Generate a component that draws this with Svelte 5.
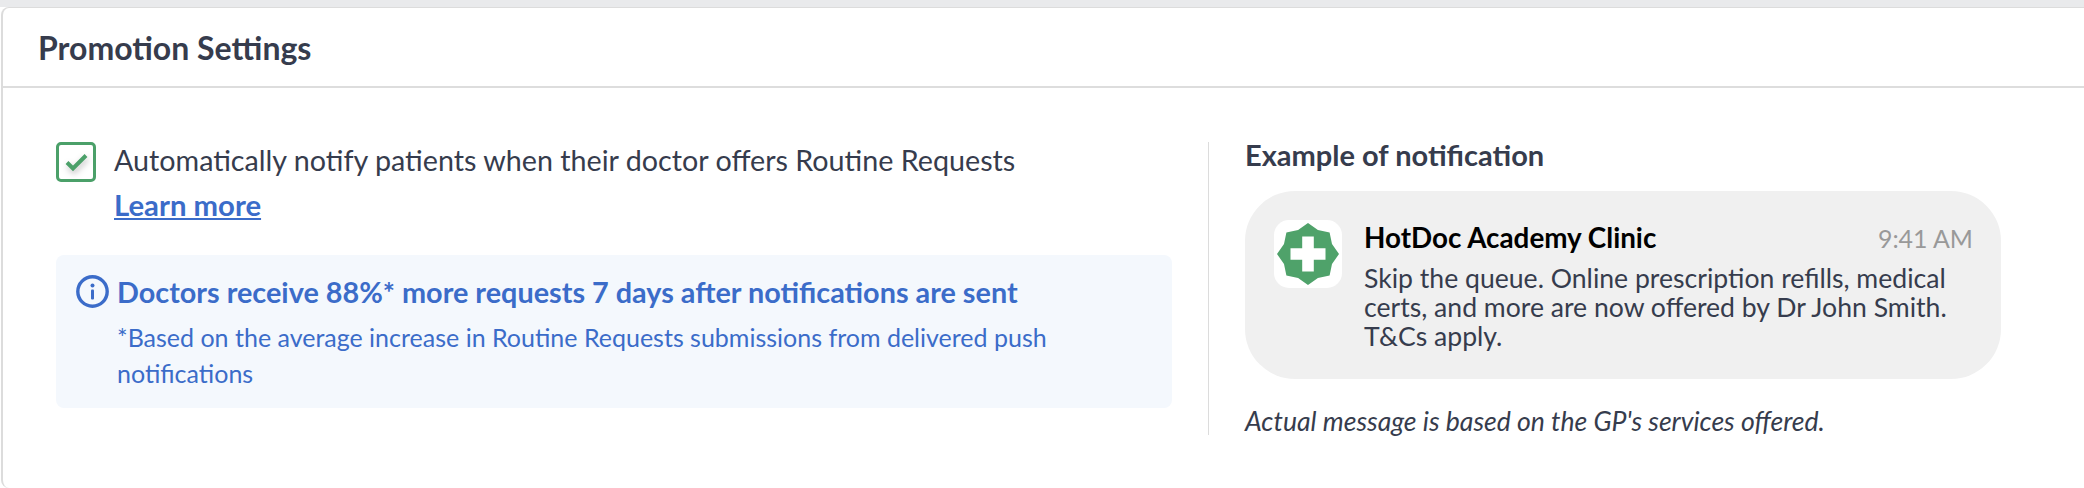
<script>
	// 8 pointed badge behind the cross, alternating tip and notch
	const badge = Array.from({ length: 16 }, (_, i) => {
		const a = (i * Math.PI) / 8;
		const r = i % 2 ? 26 : i % 4 ? 30.5 : 31;
		return `${(34 + r * Math.sin(a)).toFixed(1)},${(34 - r * Math.cos(a)).toFixed(1)}`;
	}).join(" ");
</script>

<div class="page">
	<section class="card">
		<header class="card-head">
			<h2>Promotion Settings</h2>
		</header>
		<div class="card-body">
			<div class="left">
				<div class="opt">
					<span class="box">
						<svg viewBox="0 0 30 30" width="30" height="30">
							<path d="M6 15.5l6 6L25 8.5" fill="none" stroke="#4ba069" stroke-width="4" />
						</svg>
					</span>
					<div class="opt-text">
						<p>Automatically notify patients when their doctor offers Routine Requests</p>
						<a href="#learn">Learn more</a>
					</div>
				</div>
				<div class="notice">
					<svg class="info" viewBox="0 0 33 33" width="33" height="33">
						<circle cx="16.5" cy="16.5" r="14.7" fill="none" stroke="#3b6cc9" stroke-width="3.4" />
						<circle cx="16.5" cy="10.5" r="2" fill="#3b6cc9" />
						<rect x="15" y="14.5" width="3" height="10" rx="1" fill="#3b6cc9" />
					</svg>
					<div>
						<h3>Doctors receive 88%* more requests 7 days after notifications are sent</h3>
						<p>*Based on the average increase in Routine Requests submissions from delivered push notifications</p>
					</div>
				</div>
			</div>
			<div class="right">
				<h3>Example of notification</h3>
				<div class="bubble">
					<svg class="logo" viewBox="0 0 68 68" width="68" height="68">
						<rect width="68" height="68" rx="15" fill="#fff" />
						<polygon points={badge} fill="#4fa26a" />
						<path d="M28.2 16.5h11.6v11.7h11.7v11.6H39.8v11.7H28.2V39.8H16.5V28.2h11.7z" fill="#fff" />
					</svg>
					<div class="msg">
						<div class="msg-top">
							<strong>HotDoc Academy Clinic</strong>
							<span>9:41 AM</span>
						</div>
						<p>Skip the queue. Online prescription refills, medical certs, and more are now offered by Dr John Smith. T&amp;Cs apply.</p>
					</div>
				</div>
				<em>Actual message is based on the GP's services offered.</em>
			</div>
		</div>
	</section>
</div>

<style>
	:global(body) {
		margin: 0;
		background: #fff;
	}

	.page {
		height: 488px;
		padding-top: 7px;
		box-sizing: border-box;
		background: linear-gradient(#e9eaec 7px, #fff 7px);
		font-family: Lato, "Open Sans", sans-serif;
		color: #363c4d;
		overflow: hidden;
	}

	.card {
		background: #fff;
		border-top: 1px solid #dcdcdc;
		border-left: 2px solid #dcdcdc;
		border-radius: 8px 0 0 8px;
		height: 100%;
		box-sizing: border-box;
		margin-left: 1px;
	}

	.card-head {
		height: 80px;
		box-sizing: border-box;
		border-bottom: 2px solid #dddddd;
		padding-left: 35px;
		display: flex;
		align-items: center;
	}

	h2 {
		margin: 0;
		font-size: 32px;
		font-weight: 700;
	}

	.card-body {
		display: flex;
		padding: 54px 0 0 53px;
	}

	.left {
		width: 1116px;
	}

	.opt {
		display: flex;
		gap: 18px;
	}

	.box {
		width: 40px;
		height: 40px;
		box-sizing: border-box;
		border: 3px solid #4ba069;
		border-radius: 5px;
		display: flex;
		align-items: center;
		justify-content: center;
		flex: none;
	}

	.box svg {
		filter: drop-shadow(1px 3px 3px rgba(0, 0, 0, 0.25));
	}

	.opt-text {
		margin-top: -3px;
	}

	.opt-text p {
		margin: 0;
		font-size: 28.7px;
		line-height: 42px;
	}

	.opt-text a {
		display: inline-block;
		margin-top: 3px;
		font-size: 29.3px;
		font-weight: 700;
		line-height: 42px;
		color: #3b6cc9;
	}

	.notice {
		margin-top: 29px;
		height: 153px;
		box-sizing: border-box;
		background: #f4f8fd;
		border-radius: 8px;
		padding: 20px 20px;
		display: flex;
		gap: 8px;
		color: #3b6cc9;
	}

	.notice .info {
		flex: none;
	}

	.notice h3 {
		margin: 0;
		font-size: 28.8px;
		font-weight: 700;
		line-height: 34px;
		color: #3b6cc9;
	}

	.notice p {
		margin: 10px 0 0;
		font-size: 25px;
		line-height: 36px;
	}

	.right {
		margin-left: 36px;
		border-left: 1px solid #dcdcdc;
		padding-left: 36px;
		width: 756px;
		height: 293px;
	}

	.right h3 {
		margin: -3px 0 0;
		font-size: 29px;
		font-weight: 700;
		line-height: 32px;
	}

	.bubble {
		margin-top: 20px;
		height: 188px;
		box-sizing: border-box;
		background: #f0f0f0;
		border-radius: 50px;
		padding: 29px 28px 0 29px;
		display: flex;
		gap: 22px;
	}

	.logo {
		flex: none;
	}

	.msg {
		flex: 1;
		padding-top: 1px;
	}

	.msg-top {
		display: flex;
		justify-content: space-between;
		align-items: baseline;
	}

	.msg-top strong {
		font-size: 27.8px;
		color: #000;
	}

	.msg-top span {
		font-size: 24.9px;
		color: #999;
	}

	.msg p {
		margin: 10px 0 0;
		font-size: 26.6px;
		line-height: 29px;
		max-width: 600px;
	}

	em {
		display: block;
		margin-top: 27px;
		font-size: 26.6px;
		line-height: 30px;
	}
</style>
